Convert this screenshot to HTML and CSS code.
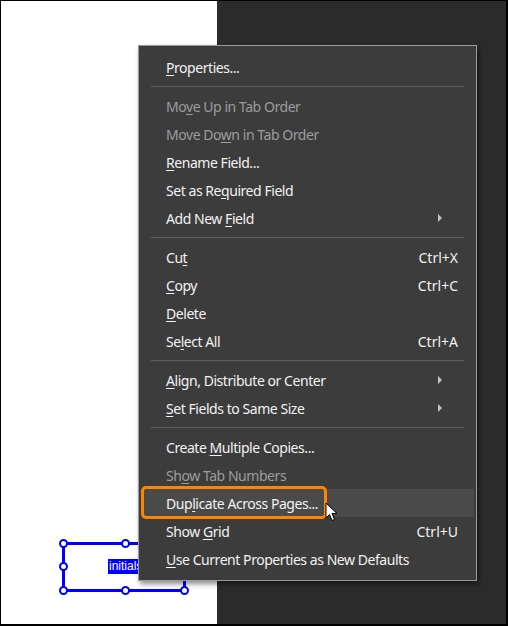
FILE: index.html
```html
<!DOCTYPE html>
<html lang="en">
<head>
    <meta charset="UTF-8">
    <title>Field context menu</title>
    <link rel="stylesheet" href="styles.css">
</head>
<body>
    <div class="screen">
        <div class="page">
            <div class="field-box">
                <span class="handle h-tl"></span>
                <span class="handle h-tm"></span>
                <span class="handle h-tr"></span>
                <span class="handle h-ml"></span>
                <span class="handle h-bl"></span>
                <span class="handle h-bm"></span>
                <span class="handle h-br"></span>
                <span class="field-name">initials</span>
            </div>
        </div>
        <div class="backdrop"></div>

        <div class="context-menu">
            <div class="item"><span class="label"><u>P</u>roperties...</span></div>
            <div class="sep"></div>
            <div class="item disabled"><span class="label">Mo<u>v</u>e Up in Tab Order</span></div>
            <div class="item disabled"><span class="label">Move Do<u>w</u>n in Tab Order</span></div>
            <div class="item"><span class="label"><u>R</u>ename Field...</span></div>
            <div class="item"><span class="label">Set as Re<u>q</u>uired Field</span></div>
            <div class="item"><span class="label">Add New <u>F</u>ield</span><span class="arrow"></span></div>
            <div class="sep"></div>
            <div class="item"><span class="label">Cu<u>t</u></span><span class="shortcut">Ctrl+X</span></div>
            <div class="item"><span class="label"><u>C</u>opy</span><span class="shortcut">Ctrl+C</span></div>
            <div class="item"><span class="label"><u>D</u>elete</span></div>
            <div class="item"><span class="label">Se<u>l</u>ect All</span><span class="shortcut">Ctrl+A</span></div>
            <div class="sep"></div>
            <div class="item"><span class="label"><u>A</u>lign, Distribute or Center</span><span class="arrow"></span></div>
            <div class="item"><span class="label"><u>S</u>et Fields to Same Size</span><span class="arrow"></span></div>
            <div class="sep"></div>
            <div class="item"><span class="label">Create <u>M</u>ultiple Copies...</span></div>
            <div class="item disabled"><span class="label">Sh<u>o</u>w Tab Numbers</span></div>
            <div class="item hover">
                <span class="label">Dup<u>l</u>icate Across Pages...</span>
                <span class="callout"></span>
                <svg class="cursor" width="13" height="20" viewBox="0 0 13 20">
                    <path d="M1 1 L1 16 L4.5 12.5 L7 18.5 L9.5 17.5 L7 11.5 L12 11.5 Z" fill="#fff" stroke="#000" stroke-width="1" stroke-linejoin="miter"/>
                </svg>
            </div>
            <div class="item"><span class="label">Show <u>G</u>rid</span><span class="shortcut">Ctrl+U</span></div>
            <div class="item"><span class="label"><u>U</u>se Current Properties as New Defaults</span></div>
        </div>
    </div>
</body>
</html>
```

FILE: styles.css
```css
* {
    box-sizing: border-box;
}

body {
    margin: 0;
    font-family: 'Noto Sans', 'Open Sans', sans-serif;
}

.screen {
    position: relative;
    width: 508px;
    height: 626px;
    border: solid #000;
    border-width: 1px 2px 2px 1px;
    display: grid;
    grid-template-columns: 216px 1fr;
    overflow: hidden;
}

.page {
    background: #fff;
    position: relative;
}

.backdrop {
    background: #2b2b2b;
}

/* selected form field on the page */
.field-box {
    position: absolute;
    left: 61px;
    top: 541px;
    width: 124px;
    height: 50px;
    border: 3px solid #0000ff;
}

.handle {
    position: absolute;
    width: 9px;
    height: 9px;
    border-radius: 50%;
    background: #fff;
    border: 2px solid #0000ff;
}

.h-tl { left: -6px; top: -6px; }
.h-tm { left: 56px; top: -6px; }
.h-tr { right: -6px; top: -6px; }
.h-ml { left: -6px; top: 17px; }
.h-bl { left: -6px; bottom: -6px; }
.h-bm { left: 56px; bottom: -6px; }
.h-br { right: -6px; bottom: -6px; }

.field-name {
    position: absolute;
    left: 43px;
    top: 14px;
    background: #0000ff;
    color: #fff;
    font-family: 'Liberation Sans', Arial, sans-serif;
    font-size: 12px;
    line-height: 15px;
    padding: 0 1px;
}

/* popup menu */
.context-menu {
    position: absolute;
    left: 137px;
    top: 44px;
    width: 339px;
    height: 536px;
    background: #3c3c3c;
    border: 1px solid #9c9c9c;
    box-shadow: 2px 3px 5px rgba(0, 0, 0, 0.45);
    padding: 7px 2px 6px 4px;
    font-size: 14px;
    letter-spacing: -0.45px;
    color: #f2f2f2;
}

.item {
    position: relative;
    height: 28px;
    display: flex;
    align-items: center;
    padding: 0 16px 0 23px;
}

.item .label {
    flex: 1;
    white-space: nowrap;
}

.item u {
    text-underline-offset: 2px;
}

.item.disabled {
    color: #9d9d9d;
}

.item.hover {
    background: #4a4a4a;
}

.shortcut {
    color: #f2f2f2;
    letter-spacing: 0;
}

.arrow {
    width: 0;
    height: 0;
    border-top: 4px solid transparent;
    border-bottom: 4px solid transparent;
    border-left: 4px solid #c4c4c4;
    margin-right: 16px;
}

.sep {
    height: 11px;
    display: flex;
    align-items: center;
    padding: 0 10px 0 8px;
}

.sep::before {
    content: '';
    flex: 1;
    height: 1px;
    background: #5e5e5e;
}

.callout {
    position: absolute;
    left: -2px;
    top: -3px;
    width: 186px;
    height: 33px;
    border: 3px solid #ff8400;
    border-radius: 5px;
}

.cursor {
    position: absolute;
    left: 182px;
    top: 13px;
}
```
